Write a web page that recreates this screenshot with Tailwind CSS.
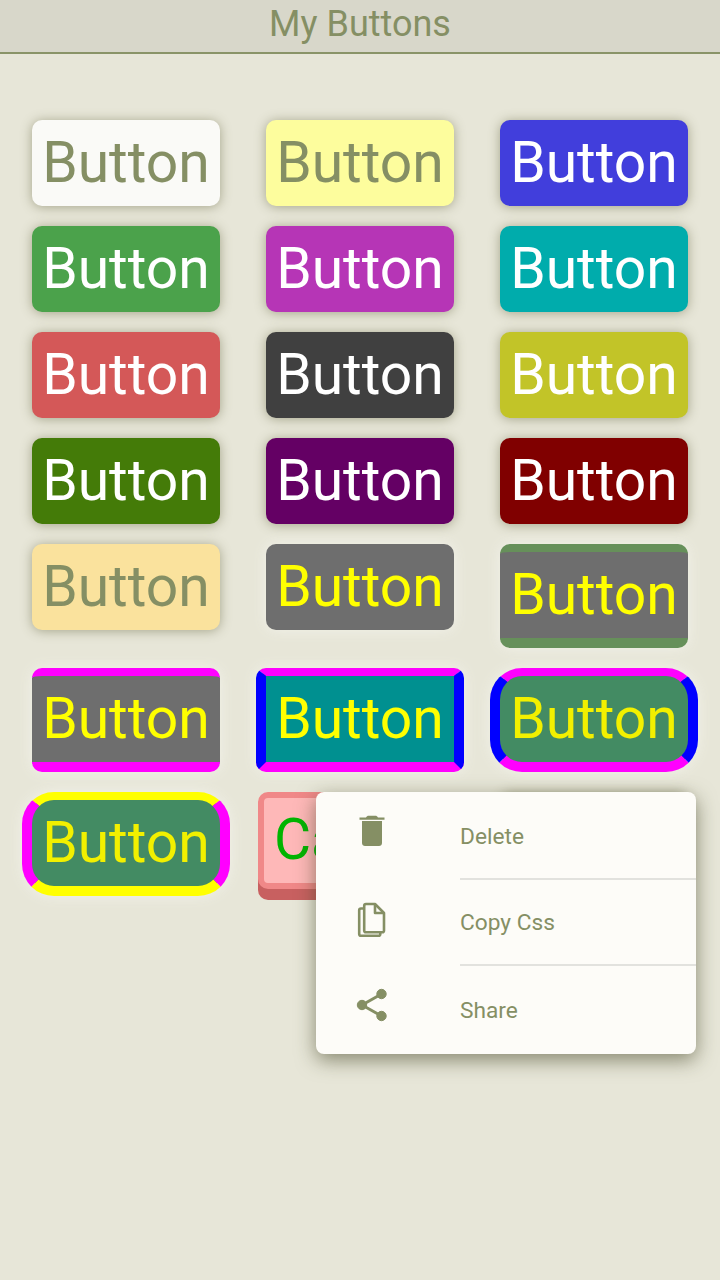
<!DOCTYPE html>
<html lang="en">
<head>
  <meta charset="UTF-8">
  <meta name="viewport" content="width=device-width, initial-scale=1.0">
  <title>My Buttons</title>
  <script src="https://cdn.jsdelivr.net/npm/@tailwindcss/browser@4"></script>
</head>
<body class="bg-[#e7e6d8] relative w-[720px] h-[1280px] overflow-hidden font-['Roboto',sans-serif]">
  <!-- Header -->
  <header class="h-[54px] bg-[#d8d7ca] border-b-2 border-[#8a9468] flex items-center justify-center">
    <h1 class="text-[36px] text-[#858f64] font-normal leading-none pb-1">My Buttons</h1>
  </header>

  <!-- Button grid -->
  <main class="grid grid-cols-3 gap-y-5 w-[702px] ml-[9px] mt-[66px] justify-items-center items-start text-[57px] leading-none">
    <button class="w-[188px] h-[86px] pb-px rounded-[10px] bg-[#fafaf7] text-[#858f64] shadow-[0_1px_12px_#a4a48a]">Button</button>
    <button class="w-[188px] h-[86px] pb-px rounded-[10px] bg-[#fdfd9d] text-[#858f64] shadow-[0_1px_12px_#a4a48a]">Button</button>
    <button class="w-[188px] h-[86px] pb-px rounded-[10px] bg-[#413edc] text-white shadow-[0_1px_12px_#a4a48a]">Button</button>

    <button class="w-[188px] h-[86px] pb-px rounded-[10px] bg-[#4ba24b] text-white shadow-[0_1px_12px_#a4a48a]">Button</button>
    <button class="w-[188px] h-[86px] pb-px rounded-[10px] bg-[#b635b6] text-white shadow-[0_1px_12px_#a4a48a]">Button</button>
    <button class="w-[188px] h-[86px] pb-px rounded-[10px] bg-[#00acac] text-white shadow-[0_1px_12px_#a4a48a]">Button</button>

    <button class="w-[188px] h-[86px] pb-px rounded-[10px] bg-[#d45858] text-white shadow-[0_1px_12px_#a4a48a]">Button</button>
    <button class="w-[188px] h-[86px] pb-px rounded-[10px] bg-[#404040] text-white shadow-[0_1px_12px_#a4a48a]">Button</button>
    <button class="w-[188px] h-[86px] pb-px rounded-[10px] bg-[#c2c428] text-white shadow-[0_1px_12px_#a4a48a]">Button</button>

    <button class="w-[188px] h-[86px] pb-px rounded-[10px] bg-[#447b08] text-white shadow-[0_1px_12px_#a4a48a]">Button</button>
    <button class="w-[188px] h-[86px] pb-px rounded-[10px] bg-[#640064] text-white shadow-[0_1px_12px_#a4a48a]">Button</button>
    <button class="w-[188px] h-[86px] pb-px rounded-[10px] bg-[#800000] text-white shadow-[0_1px_12px_#a4a48a]">Button</button>

    <button class="w-[188px] h-[86px] pb-px rounded-[10px] bg-[#fae29d] text-[#858f64] shadow-[0_1px_12px_#a4a48a]">Button</button>
    <button class="w-[188px] h-[86px] pb-px rounded-[10px] bg-[#6e6e6e] text-[#ffff00] shadow-[0_0_14px_#f2f2ea]">Button</button>
    <button class="w-[188px] h-[104px] pb-px rounded-[10px] bg-[#6e6e6e] text-[#ffff00] border-t-8 border-b-10 border-[#66905a] shadow-[0_0_14px_#f2f2ea]">Button</button>

    <button class="w-[188px] h-[104px] pb-px rounded-[10px] bg-[#6e6e6e] text-[#ffff00] border-t-8 border-b-10 border-[#ff00ff] shadow-[0_0_14px_#f2f2ea]">Button</button>
    <button class="w-[208px] h-[104px] pb-px rounded-[10px] bg-[#009090] text-[#ffff00] border-t-8 border-b-10 border-x-10 border-y-[#ff00ff] border-x-[#0000ff] shadow-[0_0_14px_#f2f2ea]">Button</button>
    <button class="w-[208px] h-[104px] pb-px rounded-[32px] bg-[#438b63] text-[#f2f000] border-t-8 border-b-10 border-x-10 border-y-[#ff00ff] border-x-[#0000ff] shadow-[0_0_14px_#f2f2ea]">Button</button>

    <button class="w-[208px] h-[104px] pb-px rounded-[32px] bg-[#438b63] text-[#f2f000] border-t-8 border-b-10 border-x-10 border-y-[#ffff00] border-x-[#ff00ff] shadow-[0_0_14px_#f2f2ea]">Button</button>
    <button class="w-[204px] h-[97px] pb-[3px] rounded-[10px] bg-[#feb8b8] text-[#00b400] border-6 border-[#f08888] shadow-[0_11px_0_#c86060] text-left pl-2.5">Cancel</button>
    <!-- covered by the menu, only its shadow shows above it -->
    <div class="w-[188px] h-[86px] rounded-[10px] bg-[#6e6e6e] shadow-[0_1px_12px_#a4a48a]"></div>
  </main>

  <!-- Popup menu -->
  <div class="absolute left-[316px] top-[792px] w-[380px] h-[262px] rounded-lg bg-[#fdfcf8] text-[22.700px] text-[#858f64] shadow-[0_6px_20px_rgba(70,72,40,0.6)]">
    <div class="flex items-center h-[86px]">
      <div class="w-[112px] flex justify-center">
        <svg class="mb-[10px]" width="32" height="34" viewBox="0 0 32 34" fill="#858f64">
          <path d="M3.500 4.500h6.500c.6-1.200 1.600-1.800 2.600-1.800h6.800c1 0 2 .6 2.600 1.800h6.500v2.300H3.500z"/>
          <path d="M6 8h20v22c0 1.700-1.300 3-3 3H9c-1.700 0-3-1.300-3-3z"/>
        </svg>
      </div>
      <span class="ml-8 mt-1">Delete</span>
    </div>
    <div class="flex items-center h-[86px] border-t-2 border-[#e2e2de] ml-[144px]">
      <span class="mt-0.5">Copy Css</span>
    </div>
    <div class="flex items-center h-[90px] border-t-2 border-[#e2e2de] ml-[144px]">
      <span class="mt-0.5">Share</span>
    </div>

    <!-- Icons for the last two rows sit in the gutter left of the dividers -->
    <svg class="absolute left-[39px] top-[110px]" width="32" height="36" viewBox="0 0 32 36" fill="none" stroke="#858f64" stroke-width="2.600" stroke-linejoin="round">
      <path d="M11 2h9l9 9v17.500c0 1-.8 1.800-1.800 1.800H11c-1 0-1.800-.8-1.800-1.800V3.800C9.200 2.800 10 2 11 2z"/>
      <path d="M20 2v9h9"/>
      <path d="M9.200 6.500H6c-1 0-1.800.8-1.800 1.800v23.700c0 1 .8 1.800 1.800 1.800h17.500c1 0 1.800-.8 1.800-1.800v-1.700"/>
    </svg>
    <svg class="absolute left-[38px] top-[195px]" width="36" height="36" viewBox="0 0 36 36" fill="#858f64" stroke="#858f64">
      <circle cx="27.500" cy="7" r="4.700"/>
      <circle cx="8" cy="18" r="4.700"/>
      <circle cx="27.500" cy="29" r="4.700"/>
      <path d="M8 18 27.500 7M8 18l19.500 11" fill="none" stroke-width="3"/>
    </svg>
  </div>
</body>
</html>
